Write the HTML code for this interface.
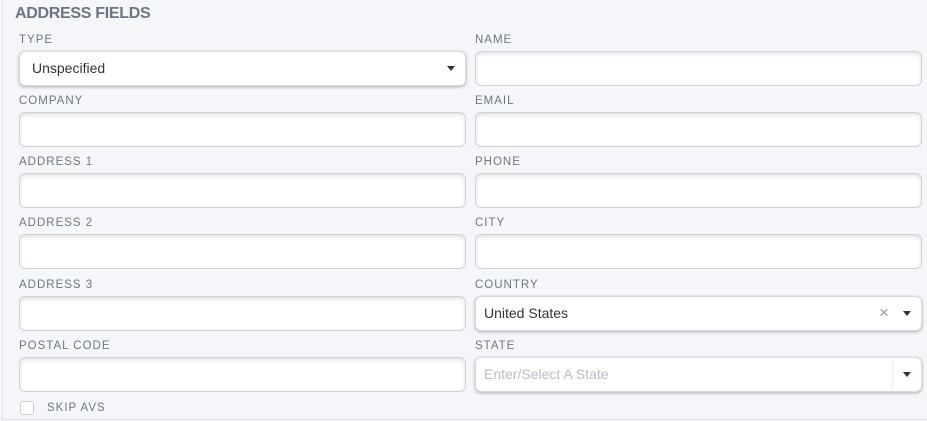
<!DOCTYPE html>
<html><head><style>
*{box-sizing:border-box;margin:0;padding:0}
body{width:927px;height:421px;background:#f4f6f9;font-family:"Liberation Sans",sans-serif;position:relative;overflow:hidden}
.frame{position:absolute;left:2px;top:-2px;width:940px;height:422px;border:1px solid #e1e4e8;border-top:none}
h1{position:absolute;left:15px;top:5px;font-size:16px;font-weight:bold;color:#6b7682;letter-spacing:-0.3px}
.l{position:absolute;font-size:11.5px;color:#6f7780;letter-spacing:1px}
.i{position:absolute;height:35px;width:447px;background:#fff;border:1px solid #cfd3d8;border-radius:6px;box-shadow:inset 0 2px 4px rgba(0,0,0,0.12)}
.s{box-shadow:0 1px 3px rgba(0,0,0,0.3);border-color:#d6d9dd}
.t{position:absolute;left:12px;top:8px;font-size:14px;color:#333}
.a{position:absolute;right:10px;top:14px;width:0;height:0;border-left:4px solid transparent;border-right:4px solid transparent;border-top:5px solid #333}
</style></head><body>
<div class="frame"></div>
<h1>ADDRESS FIELDS</h1>
<div class="l" style="left:19px;top:34px">TYPE</div>
<div class="l" style="left:475px;top:34px">NAME</div>
<div class="i s" style="left:19px;top:51px"><span class="t">Unspecified</span><span class="a"></span></div>
<div class="i" style="left:475px;top:51px;width:447px"></div>
<div class="l" style="left:19px;top:95px">COMPANY</div>
<div class="l" style="left:475px;top:95px">EMAIL</div>
<div class="i" style="left:19px;top:112px"></div>
<div class="i" style="left:475px;top:112px"></div>
<div class="l" style="left:19px;top:156px">ADDRESS 1</div>
<div class="l" style="left:475px;top:156px">PHONE</div>
<div class="i" style="left:19px;top:173px"></div>
<div class="i" style="left:475px;top:173px"></div>
<div class="l" style="left:19px;top:217px">ADDRESS 2</div>
<div class="l" style="left:475px;top:217px">CITY</div>
<div class="i" style="left:19px;top:234px"></div>
<div class="i" style="left:475px;top:234px"></div>
<div class="l" style="left:19px;top:279px">ADDRESS 3</div>
<div class="l" style="left:475px;top:279px">COUNTRY</div>
<div class="i" style="left:19px;top:296px"></div>
<div class="i s" style="left:475px;top:296px"><span class="t" style="left:8px">United States</span><span style="position:absolute;right:32px;top:6px;font-size:17px;color:#999">×</span><span class="a"></span></div>
<div class="l" style="left:19px;top:340px">POSTAL CODE</div>
<div class="l" style="left:475px;top:340px">STATE</div>
<div class="i" style="left:19px;top:357px"></div>
<div class="i s" style="left:475px;top:357px"><span class="t" style="left:8px;color:#b8bec6">Enter/Select A State</span><span style="position:absolute;right:28px;top:0;height:33px;border-left:1px solid #eee"></span><span class="a"></span></div>
<div style="position:absolute;left:20px;top:401px;width:14px;height:14px;border:1px solid #c9ced4;border-radius:3px;background:#fff"></div>
<div class="l" style="left:47px;top:402px">SKIP AVS</div>
</body></html>
